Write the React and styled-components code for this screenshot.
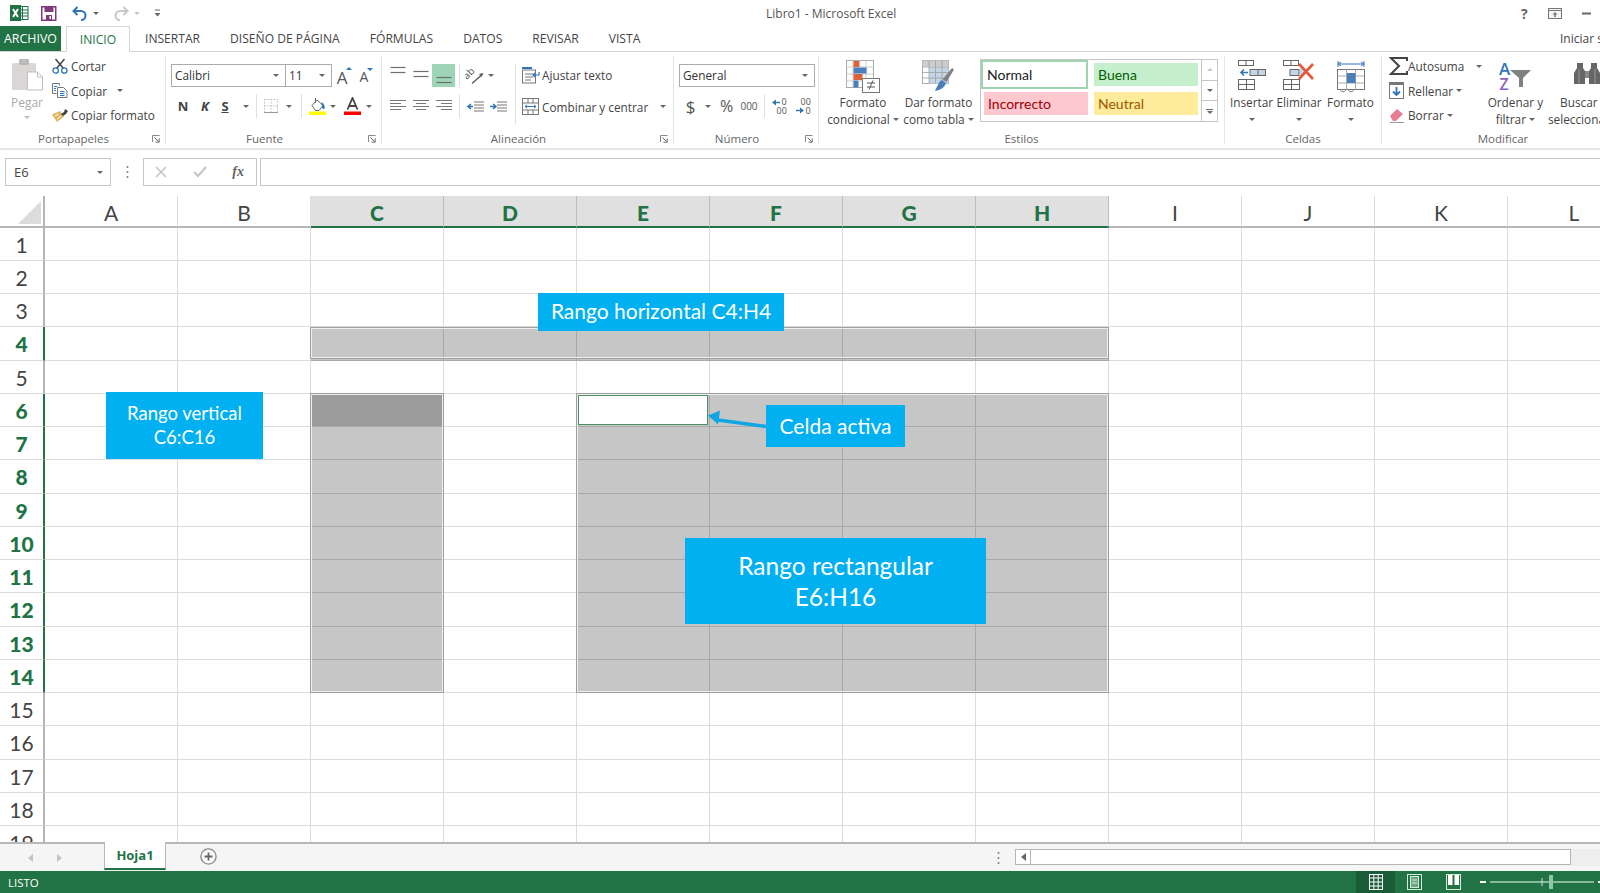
import React from 'react';
import styled, { createGlobalStyle } from 'styled-components';

const Global = createGlobalStyle`
  html, body { margin: 0; padding: 0; background: #fff; overflow: hidden; }
  * { box-sizing: border-box; }
  svg { flex: none; display: block; }
`;
const UI = `"Open Sans", "Noto Sans", "Liberation Sans", sans-serif`;
const CAL = `Lato, "Open Sans", "Liberation Sans", sans-serif`;
const GREEN = '#217346';

const Page = styled.div`
  width: 1600px; height: 893px; display: flex; flex-direction: column; overflow: hidden;
  font-family: ${UI}; color: #444; background: #fff;
`;

/* ---------- title bar ---------- */
const TitleBar = styled.header`height: 26px; display: flex; align-items: center; flex: none;`;
const Qat = styled.div`flex: 0 0 766px; display: flex; align-items: center; padding-left: 10px;`;
const QatSlot = styled.span`display: inline-flex; align-items: center; justify-content: center; width: ${p => p.$w}px; margin-left: ${p => p.$ml || 0}px;`;
const Title = styled.div`flex: 1; font-size: 12px; color: #555;`;
const WinControls = styled.div`display: flex; align-items: center; width: 79px; gap: 20px;`;
const Help = styled.span`font-size: 14px; font-weight: 700; color: #666;`;

/* ---------- tabs ---------- */
const TabBar = styled.nav`
  height: 26px; flex: none; display: flex; align-items: stretch; position: relative;
  border-bottom: 1px solid #d4d4d4; font-size: 12.1px;
`;
const FileTab = styled.div`
  width: 61px; background: ${GREEN}; color: #fff; display: flex; align-items: center; justify-content: center; font-size: 12.4px;
`;
const Tab = styled.div`
  display: flex; align-items: center; padding: 0 15px; color: ${p => p.$active ? GREEN : '#444'};
  margin-left: ${p => p.$ml || 0}px; white-space: nowrap;
  ${p => p.$active && `border: 1px solid #d4d4d4; border-bottom: 1px solid #fff; height: 26px; background: #fff; width: 64px; justify-content: center; padding: 0;`}
`;
const SignIn = styled.div`margin-left: auto; align-self: center; width: 40px; overflow: hidden; white-space: nowrap; font-size: 12px; color: #444;`;

/* ---------- ribbon ---------- */
const Ribbon = styled.div`
  height: 98px; flex: none; display: flex; align-items: flex-start; overflow: hidden;
  border-bottom: 2px solid #e6e6e6; font-size: 12px; background: #fff;
`;
const Group = styled.section`
  flex: 0 0 ${p => p.$w}px; height: 88px; margin-top: 4px; display: flex; flex-direction: column;
  position: relative; ${p => p.$last ? '' : 'border-right: 1px solid #e4e4e4;'}
`;
const GroupBody = styled.div`
  flex: none; height: 72px; display: flex; padding: ${p => p.$pad || '0'};
`;
const GroupLabel = styled.div`
  height: 16px; line-height: 22px; text-align: center; color: #666; font-size: 11.5px; white-space: nowrap;
  padding-right: ${p => p.$launcher ? 18 : 0}px;
`;
const LauncherBox = styled.span`position: absolute; right: 5px; bottom: 1px; display: flex;`;
const Caret = styled.span`
  display: inline-block; flex: none; width: 0; height: 0; border-left: 3.5px solid transparent; border-right: 3.5px solid transparent;
  border-top: 3.5px solid ${p => p.$c || '#666'}; margin-left: ${p => p.$ml || 0}px; vertical-align: middle;
`;

const PasteCol = styled.div`width: 50px; display: flex; flex-direction: column; align-items: center; padding-top: 3px; color: #aaa;`;
const PasteLabel = styled.div`margin-top: 4px; line-height: 16px; font-size: 12px;`;
const PasteCaret = styled.div`margin-top: 5px; height: 8px; display: flex;`;
const ClipCol = styled.div`display: flex; flex-direction: column; margin-top: -2px;`;
const ActionRow = styled.div`
  height: 24.5px; display: flex; align-items: center; white-space: nowrap; color: #444; font-size: 11.8px;
`;
const ActionIcon = styled.span`width: ${p => p.$w || 19}px; display: inline-flex; justify-content: flex-start; flex: none;`;

const Stack = styled.div`display: flex; flex-direction: column; gap: ${p => p.$gap ?? 7}px; margin-top: ${p => p.$mt || 0}px;`;
const Row = styled.div`display: flex; align-items: center; height: ${p => p.$h || 24}px;`;
const Slot = styled.span`
  width: ${p => p.$w}px; height: ${p => p.$h ? p.$h + 'px' : 'auto'}; flex: none; display: inline-flex; align-items: center; justify-content: center;
  ${p => p.$on ? 'background: #9fd5b7;' : ''}
`;
const VSep = styled.span`width: 1px; height: ${p => p.$h || 24}px; background: #e0e0e0; flex: none;`;
const Select = styled.div`
  width: ${p => p.$w}px; height: 23px; border: 1px solid #ababab; background: #fff; flex: none;
  display: flex; align-items: center; justify-content: space-between; padding: 0 6px 1px 3px; color: #333; font-size: 11.8px;
  margin-left: ${p => p.$ml || 0}px;
`;
const FontStyle = styled.span`
  font-size: 13px; font-weight: 700; color: #444;
  font-style: ${p => p.$i ? 'italic' : 'normal'}; text-decoration: ${p => p.$u ? 'underline' : 'none'};
`;
const Grow = styled.span`
  position: relative; font-size: ${p => p.$s}px; color: #555; font-family: ${UI}; line-height: 1; padding-top: 3px;
  &::after {
    content: ''; position: absolute; right: -5px; top: 1px; width: 0; height: 0;
    border-left: 3px solid transparent; border-right: 3px solid transparent;
    ${p => p.$down ? 'border-top: 3px solid #2f75b5;' : 'border-bottom: 3px solid #2f75b5;'}
  }
`;
const NumText = styled.span`font-size: ${p => p.$s || 16}px; color: #555; line-height: 1; font-family: ${UI};`;

const BigBtn = styled.div`
  width: ${p => p.$w}px; flex: none; display: flex; flex-direction: column; align-items: center; color: #444; text-align: center;
  font-size: 11.8px; line-height: 17px; white-space: nowrap; padding-top: 4px;
`;
const BigIcon = styled.div`height: 33px; flex: none; display: flex; align-items: flex-start; justify-content: center; margin: 0 0 1px ${p => p.$ml || 0}px;`;
const BigLine = styled.div`height: 17px; flex: none; display: flex; align-items: center; justify-content: center;`;

const Gallery = styled.div`
  width: 238px; height: 63px; flex: none; border: 1px solid #c6c6c6; margin: 3px 0 0 3px; display: flex; background: #fff;
`;
const StyleGrid = styled.div`
  flex: 1; display: grid; grid-template-columns: 107px 104px; grid-template-rows: 29px 23px; column-gap: 6px; row-gap: 3px;
`;
const StyleCell = styled.div`
  font-family: ${CAL}; font-size: 14px; display: flex; align-items: center; padding-left: 4px;
  background: ${p => p.$bg}; color: ${p => p.$fg};
  ${p => p.$box ? `border: 2px solid #9dd5b0; padding-left: 4px; margin: 0;` : ''}
  ${p => p.$m ? `margin: ${p.$m};` : ''}
`;
const GalleryScroll = styled.div`
  width: 16px; flex: none; border-left: 1px solid #c6c6c6; display: flex; flex-direction: column;
`;
const GalleryBtn = styled.div`
  flex: 1; display: flex; align-items: center; justify-content: center; flex-direction: column; gap: 1px;
  & + & { border-top: 1px solid #c6c6c6; }
`;
const MiniBar = styled.span`width: 7px; height: 1px; background: #666;`;
const CaretUp = styled.span`
  width: 0; height: 0; border-left: 3.5px solid transparent; border-right: 3.5px solid transparent; border-bottom: 3.5px solid #c8c8c8;
`;

/* ---------- formula bar ---------- */
const FormulaBar = styled.div`
  height: 46px; flex: none; padding: 8px 0 10px 5px; display: flex; align-items: stretch; background: #fff;
`;
const NameBox = styled.div`
  width: 106px; border: 1px solid #c6c6c6; display: flex; align-items: center; justify-content: space-between;
  padding: 0 7px 0 8px; font-size: 13px; color: #444;
`;
const Dots = styled.div`width: 32px; display: flex; align-items: center; justify-content: center;`;
const FxBox = styled.div`
  width: 114px; border: 1px solid #c6c6c6; display: flex; align-items: center; justify-content: space-between; padding: 0 12px 0 11px;
`;
const FxText = styled.span`font-family: "Liberation Serif", serif; font-style: italic; font-weight: 700; font-size: 14px; color: #666;`;
const Input = styled.div`flex: 1; margin-left: 3px; border: 1px solid #c6c6c6; border-right: none;`;

/* ---------- sheet ---------- */
const Sheet = styled.main`
  flex: 1; min-height: 0; position: relative; overflow: hidden;
  display: grid; grid-template-columns: 45px repeat(12, 133px); grid-template-rows: 31.6px repeat(19, 33.26px);
  font-family: ${CAL};
`;
const Corner = styled.div`
  position: relative; border-bottom: 2px solid #b5b5b5; border-right: 2px solid #b5b5b5;
  &::after { content: ''; position: absolute; left: 18px; top: 5px; width: 23px; height: 23px; background: #dcdcdc; clip-path: polygon(100% 0, 100% 100%, 0 100%); }
`;
const ColHead = styled.div`
  display: flex; align-items: center; justify-content: center; font-size: 21px; padding-top: 3px;
  border-right: 1px solid ${p => p.$sel ? '#bdbdbd' : '#dcdcdc'};
  border-bottom: 2px solid ${p => p.$sel ? GREEN : '#b5b5b5'};
  background: ${p => p.$sel ? '#e0e0e0' : '#fff'};
  color: ${p => p.$sel ? GREEN : '#444'}; font-weight: ${p => p.$sel ? 900 : 400};
`;
const RowHead = styled.div`
  display: flex; align-items: center; justify-content: center; font-size: 21px; padding-top: 1px;
  border-right: 2px solid ${p => p.$sel ? GREEN : '#b5b5b5'};
  border-bottom: 1px solid #dcdcdc;
  color: ${p => p.$sel ? GREEN : '#444'}; font-weight: ${p => p.$sel ? 900 : 400};
`;
const fills = { range: '#c6c6c6', dark: '#9c9c9c' };
const Cell = styled.div`
  background: ${p => fills[p.$fill] || '#fff'};
  border-right: 1px solid ${p => p.$fill ? '#a8a8a8' : '#dcdcdc'};
  border-bottom: 1px solid ${p => p.$fill ? '#a8a8a8' : '#dcdcdc'};
`;
const RangeFrame = styled.div`
  position: absolute; left: ${p => p.$x}px; top: ${p => p.$y}px; width: ${p => p.$w}px; height: ${p => p.$h}px;
  border: 1px solid #9e9e9e; box-shadow: inset 0 0 0 1px #eeeeee; pointer-events: none;
`;
const ActiveCell = styled.div`
  position: absolute; left: 578px; top: 199px; width: 130px; height: 30px; background: #fff; border: 1px solid #4f8f68;
`;
const Callout = styled.div`
  position: absolute; left: ${p => p.$x}px; top: ${p => p.$y}px; width: ${p => p.$w}px; height: ${p => p.$h}px;
  background: #00b0f0; color: #fff; font-size: ${p => p.$fs}px; line-height: ${p => p.$lh || 'normal'};
  display: flex; align-items: center; justify-content: center; text-align: center; font-family: ${CAL};
  padding-bottom: ${p => p.$pb || 0}px;
`;
const ArrowSvg = styled.svg`position: absolute; left: 700px; top: 210px;`;

/* ---------- sheet tabs ---------- */
const TabStrip = styled.div`
  height: 29px; flex: none; background: #f5f5f5; display: flex; align-items: stretch; position: relative;
  border-top: 2px solid #b8b8b8;
`;
const SheetNav = styled.div`width: 104px; display: flex; align-items: center; padding-left: 28px; gap: 24px;`;
const NavArrow = styled.span`
  width: 0; height: 0; border-top: 4px solid transparent; border-bottom: 4px solid transparent;
  ${p => p.$right ? 'border-left: 5px solid #c4c4c4;' : 'border-right: 5px solid #c4c4c4;'}
`;
const SheetTab = styled.div`
  width: 62px; margin-top: -2px; height: 28px; background: #fff; border-left: 1px solid #b8b8b8; border-right: 1px solid #b8b8b8;
  border-bottom: 2px solid ${GREEN}; display: flex; align-items: center; justify-content: center;
  color: ${GREEN}; font-weight: 700; font-size: 13px;
`;
const AddSheet = styled.div`margin-left: 34px; display: flex; align-items: center; padding-bottom: 2px;`;
const Splitter = styled.div`margin-left: 780px; display: flex; align-items: center;`;
const HScroll = styled.div`
  margin: 5px 0 5px 15px; width: 556px; display: flex; border: 1px solid #b5b5b5; background: #fff; height: 16px;
`;
const HLeft = styled.div`width: 15px; border-right: 1px solid #b5b5b5; display: flex; align-items: center; justify-content: center;`;
const HLeftArrow = styled.span`width: 0; height: 0; border-top: 4px solid transparent; border-bottom: 4px solid transparent; border-right: 5px solid #666;`;
const HTrack = styled.div`flex: 1; background: #eeeeee; margin: 5px 0;`;

/* ---------- status bar ---------- */
const StatusBar = styled.footer`
  height: 22px; flex: none; background: ${GREEN}; color: #fff; display: flex; align-items: center; font-size: 11.5px; padding-left: 8px;
`;
const StatusViews = styled.div`margin-left: auto; display: flex; align-items: stretch; height: 22px;`;
const ViewBtn = styled.div`
  width: 39px; display: flex; align-items: center; justify-content: center; ${p => p.$on ? 'background: #1a5c38;' : ''}
`;
const Zoom = styled.div`width: 127px; padding-left: 7px; display: flex; align-items: center;`;

/* ---------- icons ---------- */
const Svg = ({ w, h, children }) => <svg width={w} height={h} viewBox={`0 0 ${w} ${h}`} fill="none">{children}</svg>;

const ExcelLogo = () => (
  <Svg w={19} h={16}>
    <rect x="7" y="1.5" width="11" height="13" fill="#fff" stroke="#1e7145" />
    <path d="M12.5 2v12M7 5h11M7 8h11M7 11h11" stroke="#1e7145" />
    <rect x="0" y="0" width="11" height="16" fill="#1e7145" />
    <path d="M3 4l5 8M8 4l-5 8" stroke="#fff" strokeWidth="2" />
  </Svg>
);
const SaveIcon = () => (
  <Svg w={16} h={15}>
    <rect x=".75" y=".75" width="14" height="13.5" stroke="#80397b" strokeWidth="1.5" fill="#fff" />
    <rect x="3.5" y="1" width="9" height="5" fill="#80397b" />
    <rect x="5" y="9" width="6" height="5" fill="#80397b" />
    <rect x="8.5" y="10" width="1.5" height="3" fill="#fff" />
  </Svg>
);
const UndoIcon = ({ c }) => (
  <Svg w={16} h={15}>
    <path d="M5.5 1L1.5 5l4 4" stroke={c} strokeWidth="2" />
    <path d="M2 5h7a4.5 4.5 0 0 1 0 9" stroke={c} strokeWidth="2" />
  </Svg>
);
const RedoIcon = ({ c }) => (
  <Svg w={16} h={15}>
    <path d="M10.5 1l4 4-4 4" stroke={c} strokeWidth="2" />
    <path d="M14 5H7a4.5 4.5 0 0 0 0 9" stroke={c} strokeWidth="2" />
  </Svg>
);
const Customize = () => (
  <Svg w={7} h={8}><path d="M1 1h5" stroke="#666" /><path d="M.5 4h6L3.5 7.5z" fill="#666" /></Svg>
);
const RestoreWin = () => (
  <Svg w={14} h={11}>
    <rect x=".5" y=".5" width="13" height="10" stroke="#777" fill="#f4f4f4" /><path d="M.5 2.5h13" stroke="#777" />
    <path d="M7 4l-2.5 2.5h1.7V9h1.6V6.5h1.7z" fill="#777" />
  </Svg>
);
const Minimize = () => <Svg w={9} h={3}><path d="M0 1.5h9" stroke="#666" strokeWidth="2" /></Svg>;

const Launcher = () => (
  <LauncherBox>
    <Svg w={8} h={8}>
      <path d="M.5 7V.5H7.5" stroke="#888" />
      <path d="M2.5 2.5L6.5 6.5M7.2 3.5v3.7H3.5" stroke="#666" />
    </Svg>
  </LauncherBox>
);
const PasteIcon = () => (
  <Svg w={31} h={32}>
    <rect x="0" y="4" width="24" height="27" rx="1.5" fill="#dad6d6" />
    <rect x="7" y="0" width="10" height="6" rx="1" fill="#bdb9b9" />
    <path d="M15.5 13h10l5 5v13h-15z" fill="#fff" stroke="#bdbdbd" />
    <path d="M25.5 13v5h5" stroke="#bdbdbd" />
  </Svg>
);
const ScissorsIcon = () => (
  <Svg w={16} h={16}>
    <path d="M3.5 1l8 9.5M12.5 1l-8 9.5" stroke="#444" strokeWidth="1.5" />
    <circle cx="3.7" cy="12.5" r="2.7" stroke="#2f75b5" strokeWidth="1.3" />
    <circle cx="12.3" cy="12.5" r="2.7" stroke="#2f75b5" strokeWidth="1.3" />
  </Svg>
);
const CopyIcon = () => (
  <Svg w={16} h={15}>
    <path d="M.5.5h7v2M.5.5v10h4" stroke="#777" />
    <path d="M2 3.5h3M2 5.5h2M2 7.5h2" stroke="#2f75b5" />
    <path d="M5.5 4.5h6l3.5 3.5v6.5H5.5z" fill="#fff" stroke="#777" />
    <path d="M8 8.5h4.5M8 10.5h4.5M8 12.5h4.5" stroke="#2f75b5" />
  </Svg>
);
const BrushIcon = () => (
  <Svg w={17} h={15}>
    <path d="M0 6.5L5 14l7-5.5L8 3z" fill="#e3b45e" />
    <path d="M3 8l3.5-2M5 11l4-3" stroke="#fff" />
    <path d="M9 6l3-2 1-3 3 2-2 3-3 2z" fill="#444" />
  </Svg>
);
const BorderIcon = () => (
  <Svg w={14} h={14}>
    <rect x=".5" y=".5" width="13" height="13" stroke="#bbb" strokeDasharray="1.5 1.5" />
    <path d="M7 0v14M0 7h14" stroke="#bbb" strokeDasharray="1.5 1.5" />
    <path d="M0 13.5h14" stroke="#999" />
  </Svg>
);
const FillIcon = () => (
  <Svg w={17} h={18}>
    <path d="M3 8.5l5-5.5 6 5.5-4 5H6.5z" fill="#fff" stroke="#666" />
    <path d="M6.5 1v5" stroke="#666" />
    <path d="M12.5 5c2 1 3.5 4 3.2 6-.5 1.5-2.2 1-2.5-.3z" fill="#2f75b5" />
    <rect x="0" y="14.5" width="17" height="3.5" fill="#ffff00" />
  </Svg>
);
const FontColorIcon = () => (
  <Svg w={17} h={18}>
    <path d="M3.5 12.5L8.5 1l5 11.5M5.3 9h6.4" stroke="#444" strokeWidth="1.8" />
    <rect x="0" y="14.5" width="17" height="3.5" fill="#ff0000" />
  </Svg>
);
const Lines = ({ y, x, w = 16, h = 12 }) => (
  <Svg w={w} h={h}>
    {y.map((yy, i) => <path key={i} d={`M${x[i][0]} ${yy + 0.5}H${x[i][1]}`} stroke="#777" />)}
  </Svg>
);
const VLines = ({ y }) => (
  <Svg w={16} h={23}>
    {y.map((yy, i) => <path key={i} d={`M0.5 ${yy + 0.5}H15.5`} stroke="#6d6d6d" strokeWidth={1.2} />)}
  </Svg>
);
const OrientIcon = () => (
  <Svg w={19} h={16}>
    <text x="0" y="0" transform="translate(2 12) rotate(-45)" fontSize="10" fill="#555" fontFamily="Open Sans">ab</text>
    <path d="M7 15.5l9-8" stroke="#555" strokeWidth="1.3" />
    <path d="M18.5 5l-4.5 1 2.5 3z" fill="#555" />
  </Svg>
);
const IndentIcon = ({ right }) => (
  <Svg w={17} h={11}>
    <path d="M7 1h10M7 4h10M7 7h10M7 10h10" stroke="#777" />
    {right
      ? <path d="M0 5.5h5M3 3l3 2.5L3 8" stroke="#2f75b5" strokeWidth="1.5" />
      : <path d="M6 5.5H1M4 3L1 5.5 4 8" stroke="#2f75b5" strokeWidth="1.5" />}
  </Svg>
);
const WrapIcon = () => (
  <Svg w={18} h={17}>
    <rect x=".5" y="3" width="13" height="13" fill="#fff" stroke="#777" />
    <path d="M0 1h10" stroke="#2f75b5" strokeWidth="2" />
    <path d="M3 7h8M3 10h8M3 13h6" stroke="#777" />
    <path d="M17 5v3h-6M13 6l-2 2 2 2" stroke="#2f75b5" strokeWidth="1.2" />
  </Svg>
);
const MergeIcon = () => (
  <Svg w={17} h={17}>
    <rect x=".5" y=".5" width="16" height="16" fill="#fff" stroke="#777" />
    <path d="M.5 5h16M.5 12h16M6 .5V5M11 .5V5M6 12v4.5M11 12v4.5" stroke="#777" />
    <path d="M3 8.5h11M5 6.8L3 8.5 5 10.2M12 6.8l2 1.7-2 1.7" stroke="#2f75b5" />
  </Svg>
);
const DecIcon = ({ more }) => (
  <Svg w={19} h={17}>
    {more ? <>
      <path d="M5 4.5h4" stroke="#2f75b5" strokeWidth="1.4" />
      <path d="M1 4.5L5 1.5v6z" fill="#2f75b5" />
      <text x="10.5" y="7" fontSize="9" fill="#555" fontFamily="Open Sans">0</text>
      <text x="5.5" y="16" fontSize="9" fill="#555" fontFamily="Open Sans">00</text>
    </> : <>
      <text x="6.5" y="7" fontSize="9" fill="#555" fontFamily="Open Sans">00</text>
      <path d="M2 12.5h5" stroke="#2f75b5" strokeWidth="1.4" />
      <path d="M10 12.5L6 9.5v6z" fill="#2f75b5" />
      <text x="11.5" y="16" fontSize="9" fill="#555" fontFamily="Open Sans">0</text>
    </>}
  </Svg>
);
const CondIcon = () => (
  <Svg w={34} h={33}>
    <rect x=".5" y=".5" width="27" height="27" fill="#fff" stroke="#aaa" />
    <path d="M7 .5v27M20 .5v27M.5 7h27M.5 14h27M.5 21h27" stroke="#ccc" />
    <rect x="7.5" y="1" width="6" height="6" fill="#d9633a" />
    <rect x="7.5" y="7.5" width="13" height="6" fill="#4a7ebb" />
    <rect x="7.5" y="14" width="9" height="6" fill="#d9633a" />
    <rect x="7.5" y="20.5" width="5" height="7" fill="#4a7ebb" />
    <rect x="16.5" y="18.5" width="17" height="14" fill="#fff" stroke="#777" />
    <path d="M21 23h8M21 27h8M27 20.5l-4 9" stroke="#555" />
  </Svg>
);
const TableIcon = () => (
  <Svg w={33} h={32}>
    <rect x=".5" y=".5" width="26" height="23" fill="#fff" stroke="#aaa" />
    <rect x=".5" y=".5" width="26" height="6" fill="#ccc" />
    <rect x="7" y="7" width="19.5" height="16.5" fill="#c5d5e8" />
    <path d="M7 .5v23M13.5 .5v23M20 .5v23M.5 7h26M.5 12.5h26M.5 18h26" stroke="#a0a0a0" strokeWidth=".8" />
    <path d="M32 9.5L24.5 22l-4-2.5L30 8z" fill="#808080" />
    <path d="M20 20l4 3c-1 4-5 7-11 8 1-3 2-4 3-6 1-3 2-4 4-5z" fill="#4a7ebb" />
  </Svg>
);
const SmallTable = ({ x, y }) => (
  <g transform={`translate(${x} ${y})`}>
    <rect x=".5" y=".5" width="16" height="10" fill="#fff" stroke="#666" />
    <path d="M8.5 .5v10M.5 5.5h16" stroke="#666" />
  </g>
);
const InsertIcon = () => (
  <Svg w={28} h={31}>
    <rect x=".5" y=".5" width="15" height="5" fill="#fff" stroke="#666" /><path d="M8 .5v5" stroke="#666" />
    <rect x="12" y="9.5" width="15.5" height="6" fill="#c5d5e8" stroke="#666" /><path d="M20 9.5v6" stroke="#666" />
    <path d="M3 12.5h7M6 9.5l-3 3 3 3" stroke="#2f75b5" strokeWidth="1.6" />
    <SmallTable x={0} y={19} />
  </Svg>
);
const DeleteIcon = () => (
  <Svg w={32} h={31}>
    <rect x=".5" y=".5" width="15" height="5" fill="#fff" stroke="#666" /><path d="M8 .5v5" stroke="#666" />
    <rect x="7" y="9.5" width="9" height="6" fill="#c5d5e8" stroke="#666" />
    <path d="M17 8l5 4.5-5 4.5z" fill="#c5d5e8" />
    <SmallTable x={0} y={19} />
    <path d="M16 4l14 15M30 4L16 19" stroke="#e0593a" strokeWidth="2.6" />
  </Svg>
);
const FormatIcon = () => (
  <Svg w={30} h={33}>
    <path d="M2 1v6M28 1v6M2 4h26M2 4l3-2M2 4l3 2M28 4l-3-2M28 4l-3 2" stroke="#2f75b5" />
    <rect x="1.5" y="9.5" width="27" height="20" fill="#fff" stroke="#777" />
    <path d="M10.5 9.5v20M19.5 9.5v20M1.5 16h27M1.5 23h27" stroke="#aaa" />
    <rect x="11" y="13" width="8.5" height="10" fill="#4a7ebb" />
    <path d="M4 29.5c1 3 5 3 6 0M12 29.5c1 3 5 3 6 0" stroke="#777" />
  </Svg>
);
const SigmaIcon = () => (
  <Svg w={19} h={18}><path d="M18 4V1H2l8 8-8 8h16v-3" stroke="#444" strokeWidth="2" /></Svg>
);
const FillDownIcon = () => (
  <Svg w={15} h={17}>
    <rect x=".5" y=".5" width="14" height="16" fill="#fff" stroke="#777" />
    <rect x="0" y="0" width="15" height="3" fill="#777" />
    <path d="M7.5 5v8M4 9.5l3.5 3.5L11 9.5" stroke="#2f75b5" strokeWidth="1.8" />
  </Svg>
);
const EraserIcon = () => (
  <Svg w={15} h={15}>
    <path d="M1 8l7-7 6 5-7 7H4z" fill="#e77d92" />
    <path d="M1 14.5h14" stroke="#999" />
  </Svg>
);
const SortIcon = () => (
  <Svg w={32} h={31}>
    <text x="0" y="15" fontSize="17" fontWeight="600" fill="#2f75b5" fontFamily="Open Sans">A</text>
    <text x="0.5" y="30" fontSize="16" fontWeight="600" fill="#8e5fbf" fontFamily="Open Sans">Z</text>
    <path d="M11 10h21l-8 8v9h-4v-9z" fill="#808080" />
  </Svg>
);
const BinocIcon = () => (
  <Svg w={28} h={26}>
    <path d="M1 24V13l3-5V3h6v5l2 3v13z" fill="#666" />
    <path d="M27 24V13l-3-5V3h-6v5l-2 3v13z" fill="#666" />
    <rect x="12" y="11" width="4" height="7" fill="#888" />
    <path d="M6 9v15M22 9v15" stroke="#999" />
  </Svg>
);
const XIcon = () => <Svg w={12} h={12}><path d="M1 1l10 10M11 1L1 11" stroke="#c4c4c4" strokeWidth="1.6" /></Svg>;
const CheckIcon = () => <Svg w={14} h={12}><path d="M1 6l4 4 8-9" stroke="#c4c4c4" strokeWidth="2" /></Svg>;
const VDots = () => (
  <Svg w={3} h={12}><path d="M1.5 0v2M1.5 5v2M1.5 10v2" stroke="#888" strokeWidth="1.6" /></Svg>
);
const PlusCircle = () => (
  <Svg w={17} h={17}>
    <circle cx="8.5" cy="8.5" r="7.6" fill="#fafafa" stroke="#8a8a8a" strokeWidth="1.4" />
    <path d="M4.5 8.5h8M8.5 4.5v8" stroke="#666" strokeWidth="1.8" />
  </Svg>
);
const GridView = () => (
  <Svg w={14} h={16}>
    <rect x=".5" y=".5" width="13" height="15" fill="none" stroke="#fff" />
    <path d="M4.8 0v16M9.2 0v16M0 4h14M0 8h14M0 12h14" stroke="#fff" />
  </Svg>
);
const PageView = () => (
  <Svg w={15} h={16}>
    <rect x=".5" y=".5" width="14" height="15" stroke="#d7e8dd" />
    <rect x="3.5" y="2.5" width="8" height="11" fill="#6aa584" stroke="#d7e8dd" />
    <path d="M5 6h5M5 9h5" stroke="#d7e8dd" />
  </Svg>
);
const BreakView = () => (
  <Svg w={15} h={16}>
    <rect x=".5" y=".5" width="14" height="15" stroke="#d7e8dd" />
    <rect x="2" y="1" width="4.5" height="10" fill="#fff" />
    <rect x="8.5" y="1" width="4.5" height="10" fill="#fff" />
  </Svg>
);
const ZoomSlider = () => (
  <Svg w={120} h={14}>
    <path d="M0 7h6" stroke="#fff" strokeWidth="2" />
    <path d="M10 7h104" stroke="#a8d0b8" strokeWidth="1.5" />
    <path d="M62 3v8" stroke="#d7e8dd" />
    <rect x="69" y="0" width="4" height="14" fill="#8fc4a5" />
    <path d="M118 7h2" stroke="#fff" strokeWidth="2" />
  </Svg>
);
const ArrowShape = () => (
  <ArrowSvg width="70" height="28" viewBox="0 0 70 28">
    <path d="M66 20.5L18 14" stroke="#0ea5e3" strokeWidth="3.5" />
    <path d="M8 9.5L20 4.5 18 18.5z" fill="#0ea5e3" />
  </ArrowSvg>
);

/* ---------- data ---------- */
const COLS = 'ABCDEFGHIJKL'.split('');
const ROWS = Array.from({ length: 19 }, (_, i) => i + 1);
const fillFor = (c, r) => {
  if (r === 4 && c >= 2 && c <= 7) return 'range';
  if (c === 2 && r === 6) return 'dark';
  if (c === 2 && r >= 7 && r <= 14) return 'range';
  if (c >= 4 && c <= 7 && r >= 6 && r <= 14) return 'range';
  return undefined;
};
const rowSel = r => r === 4 || (r >= 6 && r <= 14);

export default function App() {
  return (
    <Page>
      <Global />
      <TitleBar>
        <Qat>
          <QatSlot $w={19}><ExcelLogo /></QatSlot>
          <QatSlot $w={16} $ml={12}><SaveIcon /></QatSlot>
          <QatSlot $w={16} $ml={15}><UndoIcon c="#2f75b5" /></QatSlot>
          <QatSlot $w={8} $ml={4}><Caret /></QatSlot>
          <QatSlot $w={16} $ml={13}><RedoIcon c="#c8c8c8" /></QatSlot>
          <QatSlot $w={8} $ml={4}><Caret $c="#c8c8c8" /></QatSlot>
          <QatSlot $w={7} $ml={13}><Customize /></QatSlot>
        </Qat>
        <Title>Libro1 - Microsoft Excel</Title>
        <WinControls>
          <Help>?</Help>
          <RestoreWin />
          <Minimize />
        </WinControls>
      </TitleBar>

      <TabBar>
        <FileTab>ARCHIVO</FileTab>
        <Tab $active $ml={5}>INICIO</Tab>
        <Tab>INSERTAR</Tab>
        <Tab>DISEÑO DE PÁGINA</Tab>
        <Tab>FÓRMULAS</Tab>
        <Tab>DATOS</Tab>
        <Tab>REVISAR</Tab>
        <Tab>VISTA</Tab>
        <SignIn>Iniciar sesión</SignIn>
      </TabBar>

      <Ribbon>
        <Group $w={166}>
          <GroupBody $pad="0 0 0 2px">
            <PasteCol>
              <PasteIcon />
              <PasteLabel>Pegar</PasteLabel>
              <PasteCaret><Caret $c="#bbb" /></PasteCaret>
            </PasteCol>
            <ClipCol>
              <ActionRow><ActionIcon><ScissorsIcon /></ActionIcon>Cortar</ActionRow>
              <ActionRow><ActionIcon><CopyIcon /></ActionIcon>Copiar<Caret $ml={10} /></ActionRow>
              <ActionRow><ActionIcon><BrushIcon /></ActionIcon>Copiar formato</ActionRow>
            </ClipCol>
          </GroupBody>
          <GroupLabel $launcher>Portapapeles</GroupLabel>
          <Launcher />
        </Group>

        <Group $w={216}>
          <GroupBody $pad="8px 0 0 5px">
            <Stack>
              <Row $h={23}>
                <Select $w={115}>Calibri<Caret /></Select>
                <Select $w={47} $ml={-1}>11<Caret /></Select>
                <Slot $w={20}><Grow $s={17}>A</Grow></Slot>
                <Slot $w={24}><Grow $s={14} $down>A</Grow></Slot>
              </Row>
              <Row>
                <Slot $w={24}><FontStyle>N</FontStyle></Slot>
                <Slot $w={20}><FontStyle $i>K</FontStyle></Slot>
                <Slot $w={20}><FontStyle $u>S</FontStyle></Slot>
                <Slot $w={21}><Caret /></Slot>
                <VSep />
                <Slot $w={27}><BorderIcon /></Slot>
                <Slot $w={10}><Caret /></Slot>
                <Slot $w={14}><VSep /></Slot>
                <Slot $w={18}><FillIcon /></Slot>
                <Slot $w={14}><Caret /></Slot>
                <Slot $w={24}><FontColorIcon /></Slot>
                <Slot $w={10}><Caret /></Slot>
              </Row>
            </Stack>
          </GroupBody>
          <GroupLabel $launcher>Fuente</GroupLabel>
          <Launcher />
        </Group>

        <Group $w={292}>
          <GroupBody $pad="8px 0 0 4px">
            <Stack>
              <Row $h={23}>
                <Slot $w={23} $h={23}><VLines y={[3, 8]} /></Slot>
                <Slot $w={23} $h={23}><VLines y={[7, 12]} /></Slot>
                <Slot $w={23} $h={23} $on><VLines y={[13, 18]} /></Slot>
                <Slot $w={8}><VSep $h={23} /></Slot>
                <Slot $w={23}><OrientIcon /></Slot>
                <Slot $w={10}><Caret /></Slot>
              </Row>
              <Row>
                <Slot $w={23}><Lines y={[0, 3, 6, 9]} x={[[0, 16], [0, 11], [0, 16], [0, 11]]} /></Slot>
                <Slot $w={23}><Lines y={[0, 3, 6, 9]} x={[[0, 16], [3, 13], [0, 16], [3, 13]]} /></Slot>
                <Slot $w={23}><Lines y={[0, 3, 6, 9]} x={[[0, 16], [5, 16], [0, 16], [5, 16]]} /></Slot>
                <Slot $w={8}><VSep /></Slot>
                <Slot $w={24}><IndentIcon /></Slot>
                <Slot $w={22}><IndentIcon right /></Slot>
              </Row>
            </Stack>
            <Slot $w={13} $h={60}><VSep $h={60} /></Slot>
            <Stack $gap={7} $mt={-1}>
              <ActionRow><ActionIcon $w={20}><WrapIcon /></ActionIcon>Ajustar texto</ActionRow>
              <ActionRow><ActionIcon $w={20}><MergeIcon /></ActionIcon>Combinar y centrar<Caret $ml={12} /></ActionRow>
            </Stack>
          </GroupBody>
          <GroupLabel $launcher>Alineación</GroupLabel>
          <Launcher />
        </Group>

        <Group $w={145}>
          <GroupBody $pad="8px 0 0 5px">
            <Stack>
              <Row $h={23}><Select $w={136}>General<Caret /></Select></Row>
              <Row>
                <Slot $w={23}><NumText $s={17}>$</NumText></Slot>
                <Slot $w={12}><Caret /></Slot>
                <Slot $w={25}><NumText $s={16}>%</NumText></Slot>
                <Slot $w={20}><NumText $s={10}>000</NumText></Slot>
                <Slot $w={10}><VSep /></Slot>
                <Slot $w={22}><DecIcon more /></Slot>
                <Slot $w={24}><DecIcon /></Slot>
              </Row>
            </Stack>
          </GroupBody>
          <GroupLabel $launcher>Número</GroupLabel>
          <Launcher />
        </Group>

        <Group $w={406}>
          <GroupBody $pad="0 0 0 7px">
            <BigBtn $w={74}>
              <BigIcon><CondIcon /></BigIcon>
              <BigLine>Formato</BigLine>
              <BigLine>condicional<Caret $ml={3} /></BigLine>
            </BigBtn>
            <BigBtn $w={77}>
              <BigIcon><TableIcon /></BigIcon>
              <BigLine>Dar formato</BigLine>
              <BigLine>como tabla<Caret $ml={3} /></BigLine>
            </BigBtn>
            <Gallery>
              <StyleGrid>
                <StyleCell $bg="#fff" $fg="#222" $box>Normal</StyleCell>
                <StyleCell $bg="#c6efce" $fg="#006100" $m="3px 0">Buena</StyleCell>
                <StyleCell $bg="#ffc7ce" $fg="#9c0006" $m="0 0 0 3px">Incorrecto</StyleCell>
                <StyleCell $bg="#ffeb9c" $fg="#9c5700">Neutral</StyleCell>
              </StyleGrid>
              <GalleryScroll>
                <GalleryBtn><CaretUp /></GalleryBtn>
                <GalleryBtn><Caret /></GalleryBtn>
                <GalleryBtn><MiniBar /><Caret /></GalleryBtn>
              </GalleryScroll>
            </Gallery>
          </GroupBody>
          <GroupLabel>Estilos</GroupLabel>
        </Group>

        <Group $w={157}>
          <GroupBody $pad="0 0 0 3px">
            <BigBtn $w={47}>
              <BigIcon><InsertIcon /></BigIcon>
              <BigLine>Insertar</BigLine>
              <BigLine><Caret /></BigLine>
            </BigBtn>
            <BigBtn $w={48}>
              <BigIcon><DeleteIcon /></BigIcon>
              <BigLine>Eliminar</BigLine>
              <BigLine><Caret /></BigLine>
            </BigBtn>
            <BigBtn $w={55}>
              <BigIcon><FormatIcon /></BigIcon>
              <BigLine>Formato</BigLine>
              <BigLine><Caret /></BigLine>
            </BigBtn>
          </GroupBody>
          <GroupLabel>Celdas</GroupLabel>
        </Group>

        <Group $w={242} $last>
          <GroupBody $pad="0 0 0 7px">
            <ClipCol>
              <ActionRow><ActionIcon><SigmaIcon /></ActionIcon>Autosuma<Caret $ml={12} /></ActionRow>
              <ActionRow><ActionIcon><FillDownIcon /></ActionIcon>Rellenar<Caret $ml={3} /></ActionRow>
              <ActionRow><ActionIcon><EraserIcon /></ActionIcon>Borrar<Caret $ml={3} /></ActionRow>
            </ClipCol>
            <BigBtn $w={66}>
              <BigIcon><SortIcon /></BigIcon>
              <BigLine>Ordenar y</BigLine>
              <BigLine>filtrar<Caret $ml={3} /></BigLine>
            </BigBtn>
            <BigBtn $w={70}>
              <BigIcon $ml={8}><BinocIcon /></BigIcon>
              <BigLine>Buscar y</BigLine>
              <BigLine>seleccionar<Caret $ml={3} /></BigLine>
            </BigBtn>
          </GroupBody>
          <GroupLabel>Modificar</GroupLabel>
        </Group>
      </Ribbon>

      <FormulaBar>
        <NameBox>E6<Caret $c="#666" /></NameBox>
        <Dots><VDots /></Dots>
        <FxBox><XIcon /><CheckIcon /><FxText>fx</FxText></FxBox>
        <Input />
      </FormulaBar>

      <Sheet>
        <Corner />
        {COLS.map((c, i) => <ColHead key={c} $sel={i >= 2 && i <= 7}>{c}</ColHead>)}
        {ROWS.map(r => (
          <React.Fragment key={r}>
            <RowHead $sel={rowSel(r)}>{r}</RowHead>
            {COLS.map((c, i) => <Cell key={c} $fill={fillFor(i, r)} />)}
          </React.Fragment>
        ))}
        <RangeFrame $x={310} $y={131} $w={799} $h={32} />
        <RangeFrame $x={310} $y={197} $w={134} $h={300} />
        <RangeFrame $x={576} $y={197} $w={533} $h={300} />
        <ActiveCell />
        <ArrowShape />
        <Callout $x={538} $y={97} $w={246} $h={38} $fs={21} $pb={3}>Rango horizontal C4:H4</Callout>
        <Callout $x={106} $y={196} $w={157} $h={67} $fs={18.5} $lh="23.5px">Rango vertical<br />C6:C16</Callout>
        <Callout $x={766} $y={209} $w={139} $h={42} $fs={21} $pb={2}>Celda activa</Callout>
        <Callout $x={685} $y={342} $w={301} $h={86} $fs={24.5} $lh="31px">Rango rectangular<br />E6:H16</Callout>
      </Sheet>

      <TabStrip>
        <SheetNav><NavArrow /><NavArrow $right /></SheetNav>
        <SheetTab>Hoja1</SheetTab>
        <AddSheet><PlusCircle /></AddSheet>
        <Splitter><VDots /></Splitter>
        <HScroll><HLeft><HLeftArrow /></HLeft></HScroll>
        <HTrack />
      </TabStrip>

      <StatusBar>
        LISTO
        <StatusViews>
          <ViewBtn $on><GridView /></ViewBtn>
          <ViewBtn><PageView /></ViewBtn>
          <ViewBtn><BreakView /></ViewBtn>
          <Zoom><ZoomSlider /></Zoom>
        </StatusViews>
      </StatusBar>
    </Page>
  );
}
